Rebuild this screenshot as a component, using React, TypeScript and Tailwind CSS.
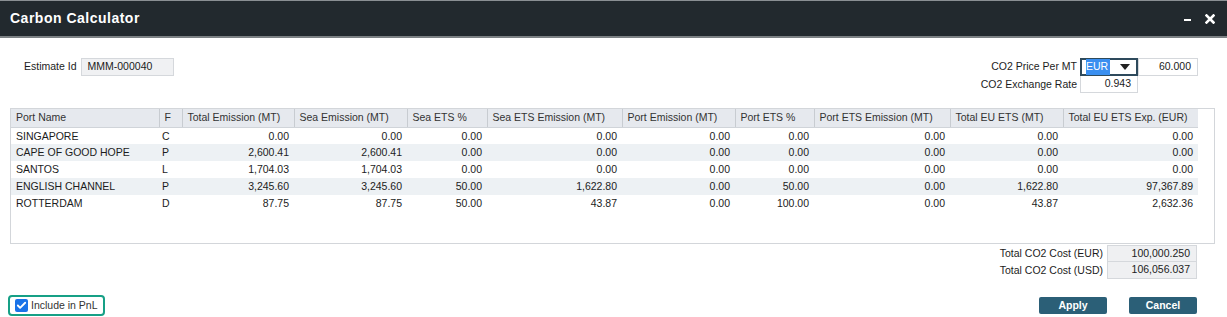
import { Check } from "lucide-react";

type Row = {
  port: string;
  f: string;
  values: string[];
};

const columns = [
  { label: "Port Name", width: 148 },
  { label: "F", width: 23 },
  { label: "Total Emission (MT)", width: 112 },
  { label: "Sea Emission (MT)", width: 113 },
  { label: "Sea ETS %", width: 80 },
  { label: "Sea ETS Emission (MT)", width: 135 },
  { label: "Port Emission (MT)", width: 113 },
  { label: "Port ETS %", width: 79 },
  { label: "Port ETS Emission (MT)", width: 136 },
  { label: "Total EU ETS (MT)", width: 113 },
  { label: "Total EU ETS Exp. (EUR)", width: 135 },
];

const rows: Row[] = [
  {
    port: "SINGAPORE",
    f: "C",
    values: ["0.00", "0.00", "0.00", "0.00", "0.00", "0.00", "0.00", "0.00", "0.00"],
  },
  {
    port: "CAPE OF GOOD HOPE",
    f: "P",
    values: ["2,600.41", "2,600.41", "0.00", "0.00", "0.00", "0.00", "0.00", "0.00", "0.00"],
  },
  {
    port: "SANTOS",
    f: "L",
    values: ["1,704.03", "1,704.03", "0.00", "0.00", "0.00", "0.00", "0.00", "0.00", "0.00"],
  },
  {
    port: "ENGLISH CHANNEL",
    f: "P",
    values: ["3,245.60", "3,245.60", "50.00", "1,622.80", "0.00", "50.00", "0.00", "1,622.80", "97,367.89"],
  },
  {
    port: "ROTTERDAM",
    f: "D",
    values: ["87.75", "87.75", "50.00", "43.87", "0.00", "100.00", "0.00", "43.87", "2,632.36"],
  },
];

export default function App() {
  return (
    <div
      className="
        h-[317px]
        w-[1227px]
        overflow-hidden
        bg-white
        text-[10.5px]
        text-[#1c1c1c]
      "
      style={{ fontFamily: '"Liberation Sans", Arial, sans-serif' }}
    >
      {/* title bar */}
      <div
        className="
          flex
          h-[38px]
          items-center
          justify-between
          border-t
          border-t-[#8a8f93]
          border-b-2
          border-b-[#7c8184]
          bg-[#22292e]
          pl-[10px]
          pr-[12px]
          text-white
        "
      >
        <span
          className="
            text-[14px]
            font-bold
            tracking-[0.5px]
          "
        >
          Carbon Calculator
        </span>

        <div
          className="
            flex
            items-center
            gap-[14px]
          "
        >
          <span
            className="
              mt-[2px]
              block
              h-[2px]
              w-[7px]
              bg-white
            "
          />
          <svg width="10" height="10" viewBox="0 0 10 10">
            <path
              d="M1.5 1.5 L8.5 8.5 M8.5 1.5 L1.5 8.5"
              stroke="white"
              strokeWidth="2.6"
              strokeLinecap="square"
            />
          </svg>
        </div>
      </div>

      {/* top fields */}
      <div
        className="
          flex
          justify-between
          pl-[24px]
          pr-[29px]
          pt-[20px]
        "
      >
        <div
          className="
            flex
            h-[18px]
            items-center
            gap-[4px]
          "
        >
          <span>Estimate Id</span>
          <div
            className="
              flex
              h-[18px]
              w-[93px]
              items-center
              border
              border-[#d5d8dc]
              bg-[#f0f1f3]
              px-[6px]
            "
          >
            MMM-000040
          </div>
        </div>

        <div
          className="
            grid
            grid-cols-[auto_58px_57px]
            items-center
            gap-x-[3px]
          "
        >
          <span className="text-right">CO2 Price Per MT</span>
          <div
            className="
              flex
              h-[18px]
              items-center
              justify-between
              border-2
              border-[#2e4a5c]
              pl-[4px]
              pr-[6px]
            "
          >
            <span
              className="
                bg-[#3a8ff0]
                pr-[2px]
                text-white
              "
            >
              EUR
            </span>
            <svg width="10" height="6" viewBox="0 0 10 6">
              <path d="M0 0 L10 0 L5 6 Z" fill="#222" />
            </svg>
          </div>
          <div
            className="
              -ml-[3px]
              flex
              h-[18px]
              items-center
              justify-end
              border
              border-[#d5d8dc]
              pr-[6px]
            "
          >
            60.000
          </div>

          <span className="text-right">CO2 Exchange Rate</span>
          <div
            className="
              flex
              h-[17px]
              items-center
              justify-end
              border
              border-t-0
              border-[#d5d8dc]
              pr-[6px]
            "
          >
            0.943
          </div>
          <span />
        </div>
      </div>

      {/* table */}
      <div
        className="
          ml-[10px]
          mt-[15px]
          h-[136px]
          w-[1205px]
          border
          border-[#d3d6da]
        "
      >
        <table
          className="
            w-[1187px]
            table-fixed
            border-collapse
          "
        >
          <colgroup>
            {columns.map((col) => (
              <col key={col.label} style={{ width: col.width }} />
            ))}
          </colgroup>
          <thead>
            <tr
              className="
                h-[18px]
                bg-[#e6e9ee]
              "
            >
              {columns.map((col, i) => (
                <th
                  key={col.label}
                  className={[
                    `
                      border-b
                      border-[#d0d4d9]
                      px-[5px]
                      text-left
                      font-normal
                      text-[#333]
                      whitespace-nowrap
                    `,
                    i > 0 ? "border-l border-l-[#c8ccd1]" : "",
                  ].join(" ")}
                >
                  {col.label}
                </th>
              ))}
            </tr>
          </thead>
          <tbody>
            {rows.map((row, i) => (
              <tr
                key={row.port}
                className={[
                  "h-[17px]",
                  i % 2 === 1 ? "bg-[#edf1f4]" : "bg-white",
                ].join(" ")}
              >
                <td
                  className="
                    px-[5px]
                    pt-[1px]
                    whitespace-nowrap
                  "
                >
                  {row.port}
                </td>
                <td className="px-[3px] pt-[1px]">{row.f}</td>
                {row.values.map((value, j) => (
                  <td
                    key={j}
                    className="
                      px-[5px]
                      pt-[1px]
                      text-right
                    "
                  >
                    {value}
                  </td>
                ))}
              </tr>
            ))}
          </tbody>
        </table>
      </div>

      {/* totals */}
      <div
        className="
          ml-auto
          mr-[30px]
          mt-[1px]
          grid
          w-fit
          grid-cols-[auto_90px]
          gap-x-[4px]
        "
      >
        <span
          className="
            flex
            h-[17px]
            items-center
            justify-end
          "
        >
          Total CO2 Cost (EUR)
        </span>
        <div
          className="
            flex
            h-[17px]
            items-center
            justify-end
            border
            border-[#d5d8dc]
            bg-[#eff0f2]
            pr-[6px]
          "
        >
          100,000.250
        </div>
        <span
          className="
            flex
            h-[17px]
            items-center
            justify-end
          "
        >
          Total CO2 Cost (USD)
        </span>
        <div
          className="
            flex
            h-[17px]
            items-center
            justify-end
            border
            border-t-0
            border-[#d5d8dc]
            bg-[#eff0f2]
            pr-[6px]
          "
        >
          106,056.037
        </div>
      </div>

      {/* footer */}
      <div
        className="
          mt-[16px]
          flex
          items-center
          justify-between
          pl-[8px]
          pr-[30px]
        "
      >
        <label
          className="
            flex
            h-[21px]
            w-[97px]
            items-center
            gap-[3px]
            rounded-[4px]
            border-2
            border-[#16a086]
            pl-[5px]
          "
        >
          <span
            className="
              flex
              size-[13px]
              items-center
              justify-center
              rounded-[2px]
              bg-[#1a73e8]
            "
          >
            <Check size={11} strokeWidth={4} color="white" />
          </span>
          <span className="text-[#333]">Include in PnL</span>
        </label>

        <div
          className="
            flex
            gap-[22px]
          "
        >
          <button
            type="button"
            className="
              h-[17px]
              w-[68px]
              rounded-[2px]
              bg-[#2b5f77]
              font-bold
              text-white
            "
          >
            Apply
          </button>
          <button
            type="button"
            className="
              h-[17px]
              w-[68px]
              rounded-[2px]
              bg-[#2b5f77]
              font-bold
              text-white
            "
          >
            Cancel
          </button>
        </div>
      </div>
    </div>
  );
}
